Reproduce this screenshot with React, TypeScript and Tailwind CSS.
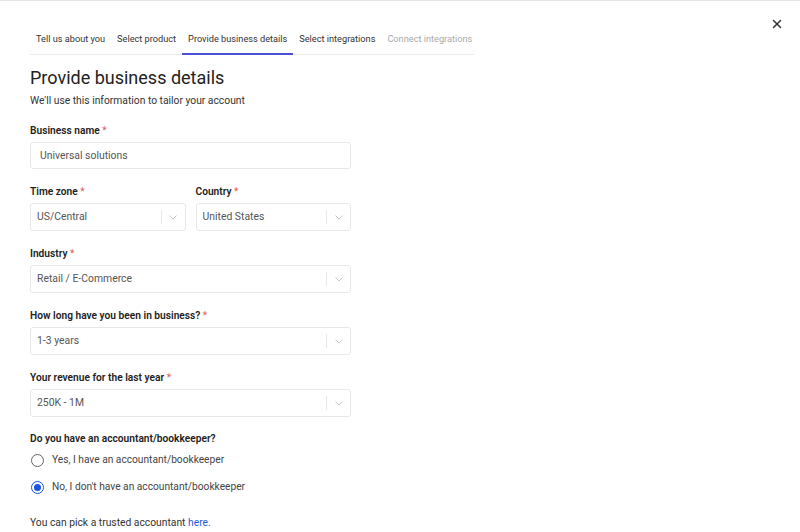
import { X } from 'lucide-react';

const tabs = [
  { label: 'Tell us about you', state: 'done' },
  { label: 'Select product', state: 'done' },
  { label: 'Provide business details', state: 'active' },
  { label: 'Select integrations', state: 'done' },
  { label: 'Connect integrations', state: 'todo' },
];

function Label({ text, required = true }: { text: string; required?: boolean }) {
  return (
    <div className="text-[10.2px] leading-[14px] font-semibold text-[#222]">
      {text}
      {required && <span className="font-normal text-[#e25c5c]"> *</span>}
    </div>
  );
}

function Select({ value }: { value: string }) {
  return (
    <div className="flex h-[28px] items-center rounded-[3px] border border-[#e6e8eb] bg-white">
      <span className="flex-1 pl-[6px] text-[10.4px] text-[#555]">{value}</span>
      <span className="h-[14px] w-px bg-[#e6e8eb]" />
      <span className="flex w-[23px] items-center justify-center">
        <svg width="8" height="5" viewBox="0 0 8 5" fill="none">
          <path d="M0.5 0.5L4 4L7.5 0.5" stroke="#c8c8c8" strokeWidth="1" />
        </svg>
      </span>
    </div>
  );
}

function Field({ label, children }: { label: string; children: React.ReactNode }) {
  return (
    <div className="flex flex-col gap-[4px]">
      <Label text={label} />
      {children}
    </div>
  );
}

function Radio({ checked, label }: { checked?: boolean; label: string }) {
  return (
    <label className="flex h-[20px] items-center gap-[8px] pl-[1px]">
      <span
        className={`flex h-[13px] w-[13px] items-center justify-center rounded-full border-[1.5px] ${
          checked ? 'border-[#1a56db]' : 'border-[#666]'
        }`}
      >
        {checked && <span className="h-[7px] w-[7px] rounded-full bg-[#1a56db]" />}
      </span>
      <span className="text-[10.2px] text-[#444]">{label}</span>
    </label>
  );
}

export default function App() {
  return (
    <div
      className="relative min-h-[532px] w-full border-t border-[#e4e4e4] bg-white"
      style={{ fontFamily: 'Roboto, "Liberation Sans", sans-serif' }}
    >
      <button className="absolute right-[16px] top-[16px] text-[#333]">
        <X className="h-[14px] w-[14px]" strokeWidth={2.5} />
      </button>

      <div className="px-[30px] pt-[26px]">
        {/* Steps */}
        <div className="flex w-[444px] border-b border-[#ececef]">
          {tabs.map((t) => (
            <div
              key={t.label}
              className={`-mb-px whitespace-nowrap px-[6px] pt-[5px] pb-[7px] text-[9.2px] leading-[14px] ${
                t.state === 'active'
                  ? 'border-b-2 border-[#4a50d6] pb-[5px] text-[#333]'
                  : t.state === 'todo'
                  ? 'text-[#aaa]'
                  : 'text-[#333]'
              }`}
            >
              {t.label}
            </div>
          ))}
        </div>

        <h1 className="mt-[11px] text-[18px] leading-[24px] text-[#222]">Provide business details</h1>
        <p className="mt-[4px] text-[10.3px] leading-[14px] text-[#333]">
          We'll use this information to tailor your account
        </p>

        <div className="mt-[16px] flex w-[321px] flex-col gap-[16px]">
          <Field label="Business name">
            <div className="flex h-[27px] items-center rounded-[3px] border border-[#e6e8eb] pl-[9px] text-[10.4px] text-[#555]">
              Universal solutions
            </div>
          </Field>

          <div className="grid grid-cols-2 gap-[10px]">
            <Field label="Time zone">
              <Select value="US/Central" />
            </Field>
            <Field label="Country">
              <Select value="United States" />
            </Field>
          </div>

          <Field label="Industry">
            <Select value="Retail / E-Commerce" />
          </Field>
          <Field label="How long have you been in business?">
            <Select value="1-3 years" />
          </Field>
          <Field label="Your revenue for the last year">
            <Select value="250K - 1M" />
          </Field>

          <div className="-mt-[1px] flex flex-col gap-[4px]">
            <Label text="Do you have an accountant/bookkeeper?" required={false} />
            <div className="flex flex-col gap-[7px]">
              <Radio label="Yes, I have an accountant/bookkeeper" />
              <Radio checked label="No, I don't have an accountant/bookkeeper" />
            </div>
          </div>
        </div>

        <p className="mt-[19px] text-[10.3px] leading-[14px] text-[#333]">
          You can pick a trusted accountant <a className="text-[#2a5bd7]">here.</a>
        </p>
      </div>
    </div>
  );
}
